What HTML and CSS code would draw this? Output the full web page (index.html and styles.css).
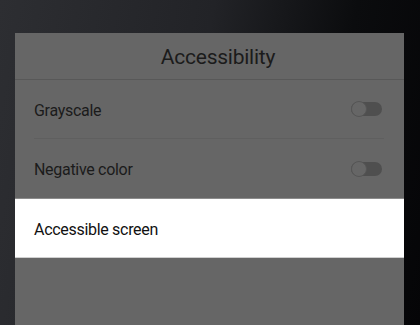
FILE: index.html
```html
<!DOCTYPE html>
<html>
<head>
<meta charset="utf-8">
<link rel="stylesheet" href="styles.css">
</head>
<body>
<div class="screen">
  <div class="panel">
    <div class="header">Accessibility</div>
    <div class="row first">
      <span class="label">Grayscale</span>
      <span class="toggle"><span class="knob"></span></span>
    </div>
    <div class="divider"></div>
    <div class="row">
      <span class="label">Negative color</span>
      <span class="toggle"><span class="knob"></span></span>
    </div>
    <div class="row highlight">
      <span class="label">Accessible screen</span>
    </div>
  </div>
</div>
</body>
</html>
```

FILE: styles.css
```css
html, body {
  margin: 0;
  padding: 0;
  height: 100%;
}
body {
  background: linear-gradient(100deg, #2d2e32 0%, #222327 45%, #0b0c0e 75%, #050507 100%);
  font-family: Roboto, "Noto Sans", sans-serif;
  overflow: hidden;
}
.screen {
  padding: 33px 16px 0 15px;
  height: 100%;
  box-sizing: border-box;
}
.panel {
  background: #666666;
  height: 100%;
}
.header {
  height: 46px;
  line-height: 48px;
  text-align: center;
  font-size: 21px;
  letter-spacing: -0.25px;
  padding-left: 17px;
  color: #1b1b1b;
  border-bottom: 1px solid #585858;
}
.row {
  height: 59px;
  display: flex;
  align-items: center;
  justify-content: space-between;
  padding: 2px 22px 0 19px;
  box-sizing: border-box;
}
.row.first {
  height: 58px;
}
.label {
  font-size: 16px;
  letter-spacing: -0.3px;
  color: #1b1b1b;
}
.divider {
  height: 1px;
  background: #5f5f5f;
  margin: 0 20px 0 19px;
}
.highlight {
  background: #ffffff;
  border-top: 1px solid #8c8c8c;
  border-bottom: 1px solid #d0d0d0;
  height: 60px;
}
.highlight .label {
  color: #111111;
}
.toggle {
  position: relative;
  width: 31px;
  height: 14px;
  margin-top: -2px;
  border-radius: 7px;
  background: #4f4f4f;
}
.knob {
  position: absolute;
  left: 0;
  top: -1px;
  width: 14px;
  height: 14px;
  border-radius: 50%;
  background: #666666;
  border: 1px solid #555555;
}
```
